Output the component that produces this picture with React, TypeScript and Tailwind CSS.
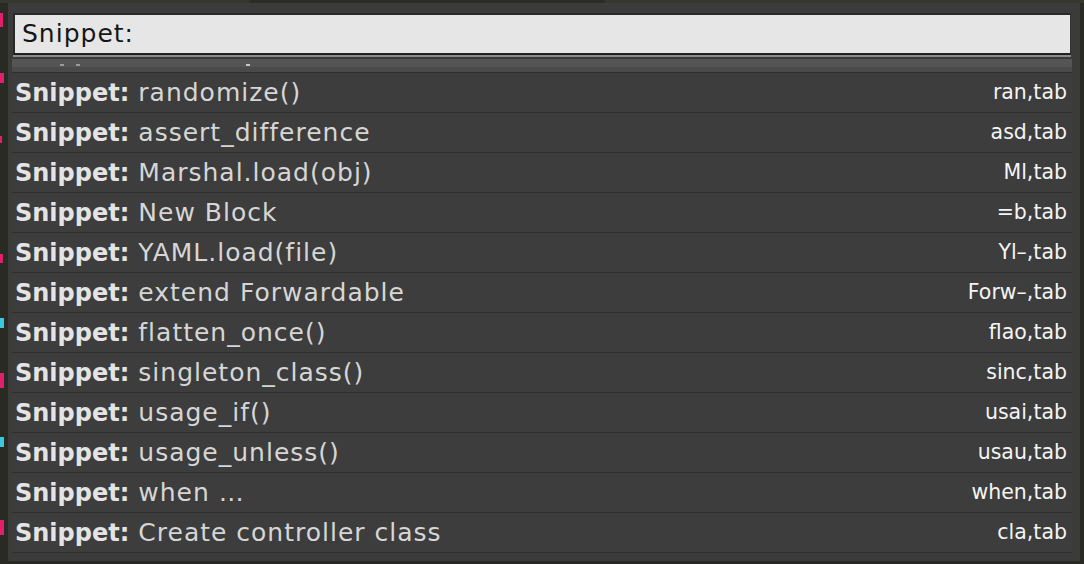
import React from "react";

const rows: [string, string][] = [
  ["randomize()", "ran,tab"],
  ["assert_difference", "asd,tab"],
  ["Marshal.load(obj)", "Ml,tab"],
  ["New Block", "=b,tab"],
  ["YAML.load(file)", "Yl\u2013,tab"],
  ["extend Forwardable", "Forw\u2013,tab"],
  ["flatten_once()", "flao,tab"],
  ["singleton_class()", "sinc,tab"],
  ["usage_if()", "usai,tab"],
  ["usage_unless()", "usau,tab"],
  ["when \u2026", "when,tab"],
  ["Create controller class", "cla,tab"],
];

const marks: { top: number; h: number; w: number; c: string }[] = [
  { top: 13, h: 14, w: 3, c: "bg-[#e0206a]" },
  { top: 73, h: 10, w: 4, c: "bg-[#e0206a]" },
  { top: 136, h: 7, w: 2, c: "bg-[#e0206a]" },
  { top: 254, h: 9, w: 3, c: "bg-[#e0206a]" },
  { top: 318, h: 10, w: 4, c: "bg-[#3ac8e0]" },
  { top: 373, h: 15, w: 4, c: "bg-[#e0206a]" },
  { top: 437, h: 10, w: 4, c: "bg-[#3ac8e0]" },
  { top: 520, h: 15, w: 4, c: "bg-[#e0206a]" },
];

function Row({ name, key2 }: { name: string; key2: string }) {
  return (
    <div className="flex h-[40px] shrink-0 items-center justify-between border-b border-[#2f2f2f] bg-[#3d3d3d] pl-[3px] pr-[5px]">
      <div className="flex items-center whitespace-nowrap">
        <span className="text-[24px] font-bold text-[#e4e4e4]">Snippet:</span>
        <span className="ml-[9px] text-[25px] tracking-[1px] text-[#d6d6d6]">{name}</span>
      </div>
      <span className="whitespace-nowrap text-[20.5px] text-[#f4f4f4]">{key2}</span>
    </div>
  );
}

export default function App() {
  return (
    <div
      className="relative h-[564px] w-[1084px] overflow-hidden bg-[#2a2a25]"
      style={{ fontFamily: '"DejaVu Sans", sans-serif' }}
    >
      {marks.map((m, i) => (
        <div
          key={i}
          className={"absolute left-0 " + m.c}
          style={{ top: m.top, height: m.h, width: m.w }}
        />
      ))}
      <div className="flex h-[3px]">
        <div className="w-[250px] bg-[#36362f]" />
        <div className="flex-1 bg-[#2c2c26]" />
        <div className="w-[479px] bg-[#36362f]" />
      </div>
      <div className="ml-[8px] mr-[4px] flex h-[558px] flex-col bg-[#3b3b3b] pt-[10px]">
        <div className="ml-[5px] mr-[9px] flex h-[42px] shrink-0 items-center border-t-2 border-l-2 border-b-2 border-r border-t-[#2a2a2a] border-l-[#2a2a2a] border-b-[#222] border-r-[#333] bg-[#e6e6e6] pl-[7px]">
          <span className="text-[25px] tracking-[1px] text-[#161616]">Snippet:</span>
        </div>
        <div className="ml-[5px] mr-[9px] h-[2px] shrink-0 bg-[#8c8c8c]" />
        <div className="mt-[2px] ml-[4px] mr-[8px] flex flex-1 flex-col overflow-hidden">
          <div className="flex h-[14px] shrink-0 flex-col border-b border-[#2f2f2f]">
            <div className="relative h-[8px] bg-[#555555]">
              <div className="absolute left-[48px] top-[5px] h-[2px] w-[4px] bg-[#9a9a9a]" />
              <div className="absolute left-[64px] top-[5px] h-[2px] w-[4px] bg-[#9a9a9a]" />
              <div className="absolute left-[234px] top-[5px] h-[2px] w-[4px] bg-[#c8c8c8]" />
            </div>
            <div className="flex-1 bg-[#4a4a4a]" />
          </div>
          {rows.map(([n, k]) => (
            <Row key={n} name={n} key2={k} />
          ))}
        </div>
      </div>
    </div>
  );
}
